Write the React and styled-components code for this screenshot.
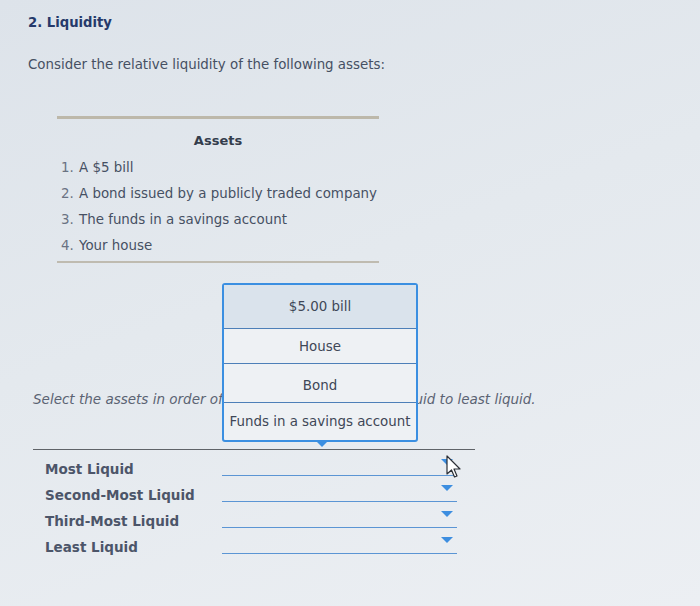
import React from 'react'
import styled, { createGlobalStyle } from 'styled-components'

const GlobalStyle = createGlobalStyle`
  html, body {
    margin: 0;
    padding: 0;
  }
  body {
    background: linear-gradient(160deg, #dde3ea 0%, #e4e9ee 45%, #eceff3 100%);
    min-height: 606px;
    font-family: "DejaVu Sans", Verdana, sans-serif;
    color: #434c5b;
  }
`

const Page = styled.div`
  padding: 13px 0 0 28px;
  width: 672px;
  height: 593px;
  overflow: hidden;
`

const Title = styled.h2`
  margin: 0;
  font-size: 13.2px;
  line-height: 20px;
  font-weight: bold;
  color: #25396a;
`

const Prompt = styled.p`
  margin: 22px 0 0;
  font-size: 13.4px;
  line-height: 20px;
  color: #465063;
`

const AssetTable = styled.div`
  margin: 41px 0 0 29px;
  width: 322px;
  border-top: 3px solid #bdb8aa;
  border-bottom: 2px solid #bfbbb0;
  padding-bottom: 2px;
`

const TableHead = styled.div`
  padding-top: 12px;
  text-align: center;
  font-size: 13px;
  line-height: 20px;
  font-weight: bold;
  color: #343d4c;
`

const AssetList = styled.ol`
  margin: 4px 0 0;
  padding-left: 21px;
  font-size: 13.4px;
  line-height: 26px;
  color: #465063;
  li {
    padding-left: 1px;
  }
  li::marker {
    color: #6a7282;
  }
`

const Answer = styled.div`
  position: relative;
  margin: 126px 0 0 5px;
`

const Instruction = styled.p`
  margin: 0;
  font-size: 13.5px;
  line-height: 20px;
  font-style: italic;
  color: #5b6373;
  white-space: nowrap;
`

const Rule = styled.div`
  margin-top: 40px;
  width: 442px;
  height: 1px;
  background: #5f6368;
`

const Rows = styled.div`
  margin-top: 6px;
`

const Row = styled.div`
  display: flex;
  align-items: center;
  height: 26px;
  padding-left: 12px;
`

const Label = styled.div`
  width: 177px;
  font-size: 13.5px;
  font-weight: 600;
  color: #4c5569;
  white-space: nowrap;
`

const Select = styled.div`
  position: relative;
  width: 235px;
  height: 26px;
  border-bottom: 1px solid #5b95d4;
  box-sizing: border-box;
  transform: translateY(-6px);
`

const Caret = styled.span`
  position: absolute;
  right: 4px;
  top: 9px;
  width: 0;
  height: 0;
  border-left: 6px solid transparent;
  border-right: 6px solid transparent;
  border-top: 6px solid #3d8ee0;
`

const Menu = styled.div`
  position: absolute;
  left: 189px;
  top: -106px;
  width: 196px;
  background: #eef1f4;
  border: 2px solid #3b8fe1;
  border-radius: 3px;
  box-sizing: border-box;
  &::after {
    content: '';
    position: absolute;
    left: 92px;
    bottom: -7px;
    border-left: 6px solid transparent;
    border-right: 6px solid transparent;
    border-top: 6px solid #3b8fe1;
  }
`

const Option = styled.div`
  height: ${p => p.$h}px;
  display: flex;
  align-items: ${p => (p.$low ? 'flex-end' : 'center')};
  justify-content: center;
  padding-bottom: ${p => (p.$low ? 9 : 0)}px;
  box-sizing: border-box;
  font-size: 13.4px;
  color: #3e4757;
  white-space: nowrap;
  background: ${p => (p.$active ? '#dae3ec' : 'transparent')};
  border-top: ${p => (p.$first ? 'none' : '1px solid #4d7fb8')};
`

const Cursor = styled.svg`
  position: absolute;
  left: 413px;
  top: 66px;
`

const options = [
  { text: '$5.00 bill', h: 43, active: true },
  { text: 'House', h: 35 },
  { text: 'Bond', h: 39, low: true },
  { text: 'Funds in a savings account', h: 38 },
]

const ranks = ['Most Liquid', 'Second-Most Liquid', 'Third-Most Liquid', 'Least Liquid']

export default function App() {
  return (
    <>
      <GlobalStyle />
      <Page>
        <Title>2. Liquidity</Title>
        <Prompt>Consider the relative liquidity of the following assets:</Prompt>

        <AssetTable>
          <TableHead>Assets</TableHead>
          <AssetList>
            <li>A $5 bill</li>
            <li>A bond issued by a publicly traded company</li>
            <li>The funds in a savings account</li>
            <li>Your house</li>
          </AssetList>
        </AssetTable>

        <Answer>
          <Instruction>
            Select the assets in order of their liquidity, from most liquid to least liquid.
          </Instruction>
          <Rule />
          <Rows>
            {ranks.map(r => (
              <Row key={r}>
                <Label>{r}</Label>
                <Select>
                  <Caret />
                </Select>
              </Row>
            ))}
          </Rows>

          <Menu>
            {options.map((o, i) => (
              <Option key={o.text} $h={o.h} $active={o.active} $low={o.low} $first={i === 0}>
                {o.text}
              </Option>
            ))}
          </Menu>

          <Cursor width="16" height="24" viewBox="0 0 16 24">
            <path
              d="M1 1 L1 19 L5.5 15 L8.5 22 L11 21 L8 14 L14 14 Z"
              fill="#ffffff"
              stroke="#2b2f36"
              strokeWidth="1.2"
              strokeLinejoin="round"
            />
          </Cursor>
        </Answer>
      </Page>
    </>
  )
}
